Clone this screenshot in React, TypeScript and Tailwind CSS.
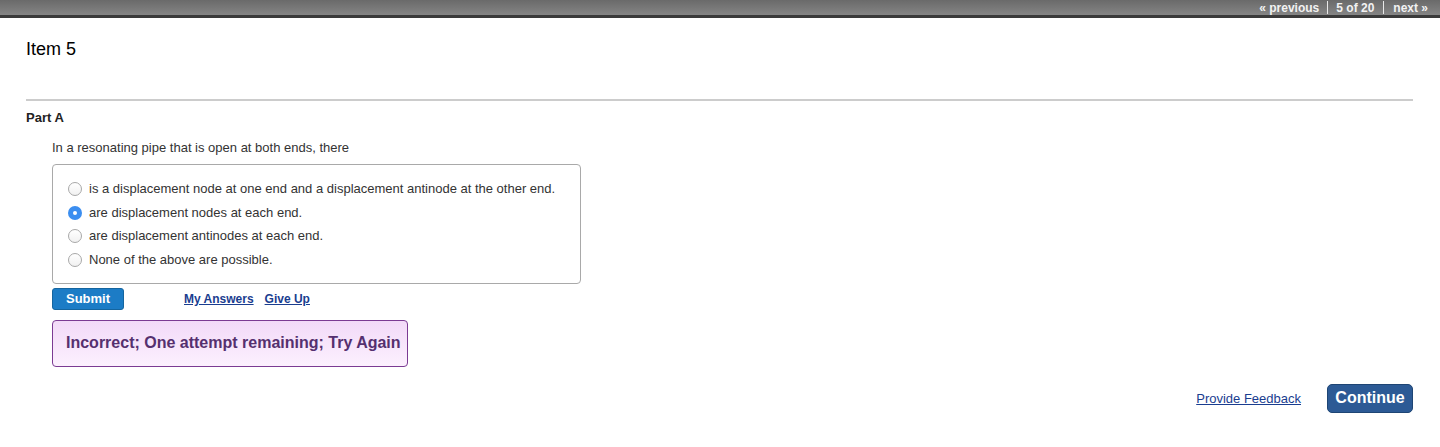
import React, { useState } from "react";

const options = [
  "is a displacement node at one end and a displacement antinode at the other end.",
  "are displacement nodes at each end.",
  "are displacement antinodes at each end.",
  "None of the above are possible.",
];

function Radio({ checked }: { checked: boolean }) {
  if (checked) {
    return (
      <span className="flex h-[14px] w-[14px] flex-none items-center justify-center rounded-full bg-[#3b8ef0]">
        <span className="h-[4px] w-[4px] rounded-full bg-white" />
      </span>
    );
  }
  return (
    <span className="h-[14px] w-[14px] flex-none rounded-full border border-[#a8a8a8] bg-gradient-to-b from-white to-[#f1f1f1]" />
  );
}

export default function App() {
  const [selected, setSelected] = useState(1);

  return (
    <div className="min-h-[447px] bg-white font-['Liberation_Sans',Arial,sans-serif] text-[#222]">
      {/* top nav bar */}
      <div className="flex h-[15px] items-center justify-end bg-gradient-to-b from-[#6a6a6a] to-[#858585] pr-[12px] text-[12px] font-bold leading-none text-[#f2f2f2]">
        <span>« previous</span>
        <span className="mx-[8px] h-[13px] w-px bg-[#e8e8e8]" />
        <span>5 of 20</span>
        <span className="mx-[9px] h-[13px] w-px bg-[#e8e8e8]" />
        <span>next »</span>
      </div>
      <div className="h-[3px] bg-[#3a3a3a]" />

      <div className="px-[26px]">
        <h1 className="mt-[20px] text-[18px] leading-[22px] text-black">Item 5</h1>

        <div className="mr-[1px] mt-[39px] h-[2px] bg-[#cccccc]" />

        <h2 className="mt-[9px] text-[13px] font-bold leading-[16px] text-[#222]">Part A</h2>

        <div className="pl-[26px]">
          <p className="mt-[14px] text-[13px] leading-[15px] text-[#333]">
            In a resonating pipe that is open at both ends, there
          </p>

          <div className="mt-[9px] w-[529px] rounded-[4px] border border-[#a9a9a9] px-[15px] pb-[11px] pt-[12px]">
            {options.map((opt, i) => (
              <label
                key={i}
                onClick={() => setSelected(i)}
                className="flex h-[23.7px] cursor-pointer items-center gap-[7px] text-[13px] text-[#333]"
              >
                <Radio checked={selected === i} />
                <span>{opt}</span>
              </label>
            ))}
          </div>

          <div className="mt-[4px] flex items-center">
            <button className="h-[22px] w-[72px] rounded-[3px] border border-[#15659f] bg-[#1c7cc6] text-[13px] font-bold leading-none text-white">
              Submit
            </button>
            <a href="#" className="ml-[60px] text-[12px] font-bold text-[#1a3d8f] underline">
              My Answers
            </a>
            <a href="#" className="ml-[11px] text-[12px] font-bold text-[#1a3d8f] underline">
              Give Up
            </a>
          </div>

          <div className="mt-[10px] flex h-[47px] w-[356px] items-center rounded-[4px] border border-[#7b3b93] bg-gradient-to-b from-[#f2daf8] to-[#fcf0fe] pl-[13px] text-[16px] font-bold text-[#55306f]">
            Incorrect; One attempt remaining; Try Again
          </div>
        </div>

        <div className="mt-[17px] flex items-center justify-end pr-[1px]">
          <a href="#" className="text-[13px] text-[#1a3d8f] underline">
            Provide Feedback
          </a>
          <button className="ml-[26px] h-[29px] w-[86px] rounded-[5px] border border-[#1e4574] bg-[#2c5a95] text-[16px] font-bold text-white">
            Continue
          </button>
        </div>
      </div>
    </div>
  );
}
